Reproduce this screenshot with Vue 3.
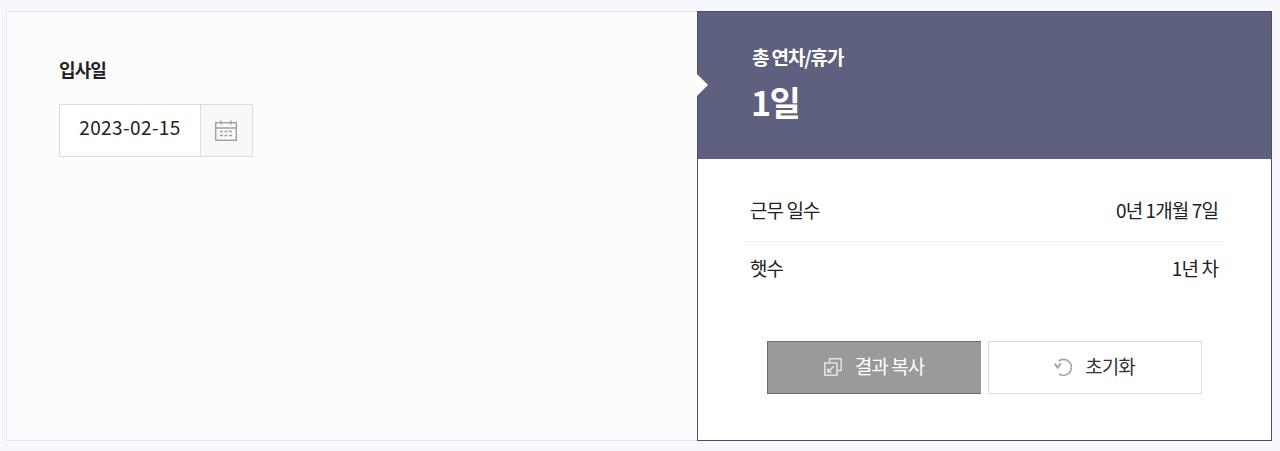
<script setup>
const rows = [
  { label: '근무 일수', value: '0년 1개월 7일' },
  { label: '햇수', value: '1년 차' },
]
</script>

<template>
  <div class="page">
    <div class="card">
      <section class="left">
        <div class="label">입사일</div>
        <div class="date">
          <div class="date-value">2023-02-15</div>
          <div class="date-btn">
            <svg width="22" height="21" viewBox="0 0 22 21" fill="none" stroke="#a0a0a0" stroke-width="1.4">
              <rect x="0.7" y="2.7" width="20.6" height="17.6" />
              <path d="M0.7 8H21.3M6 0.5V4.5M16 0.5V4.5" />
              <path d="M5 11.5H8M9.5 11.5H12.5M14 11.5H17M5 15.5H8M9.5 15.5H12.5M14 15.5H17" stroke-width="1.5" />
            </svg>
          </div>
        </div>
      </section>
      <section class="right">
        <div class="head">
          <div class="head-title">총 연차/휴가</div>
          <div class="head-value">1일</div>
        </div>
        <div class="body">
          <div v-for="r in rows" :key="r.label" class="row">
            <span>{{ r.label }}</span>
            <span>{{ r.value }}</span>
          </div>
          <div class="actions">
            <button class="btn primary">
              <svg width="18" height="18" viewBox="0 0 18 18" fill="none" stroke="#e4e4e4" stroke-width="1.5">
                <path d="M5.5 4.5V0.8H17.2V12.5H13.5" />
                <rect x="0.8" y="5" width="12.2" height="12.2" />
                <path d="M4.5 13.5L10 8" />
                <path d="M4 10.5V14H7.5" stroke-width="1.7" />
              </svg>
              결과 복사
            </button>
            <button class="btn plain">
              <svg width="18" height="18" viewBox="0 0 18 18" fill="none" stroke="#a8a8a8" stroke-width="1.7">
                <path d="M4.5 3A8 8 0 1 1 5 16" />
                <path d="M0.8 5.6L3.6 9.6L6.8 5.4" stroke-width="2" />
              </svg>
              초기화
            </button>
          </div>
        </div>
      </section>
    </div>
  </div>
</template>

<style>
html, body { margin: 0; background: #f7f8fe; }
</style>

<style scoped>
.page {
  box-sizing: border-box;
  height: 451px;
  padding: 11px 8px 10px 6px;
  font-family: "Noto Sans CJK KR", "Noto Sans", sans-serif;
  color: #222;
}
.card {
  display: flex;
  height: 430px;
}
.left {
  flex: 1;
  box-sizing: border-box;
  padding: 44px 0 0 52px;
  background: #fcfcfd;
  border: 1px solid #e4e4ee;
  border-right: 0;
}
.label {
  font-size: 18px;
  font-weight: 700;
  line-height: 26px;
  letter-spacing: -0.9px;
}
.date {
  display: flex;
  width: 194px;
  height: 53px;
  margin-top: 22px;
  box-sizing: border-box;
  border: 1px solid #dcdcdc;
}
.date-value {
  width: 141px;
  box-sizing: border-box;
  padding-bottom: 8px;
  background: #fff;
  border-right: 1px solid #dcdcdc;
  display: flex;
  align-items: center;
  justify-content: center;
  font-size: 19px;
  letter-spacing: 0.4px;
  color: #222;
}
.date-btn {
  flex: 1;
  background: #f8f8f8;
  display: flex;
  align-items: center;
  justify-content: center;
  padding: 0 2px 0 0;
}
.right {
  width: 575px;
  box-sizing: border-box;
  border: 1px solid #4b4e6d;
  background: #fff;
  display: flex;
  flex-direction: column;
}
.head {
  position: relative;
  height: 147px;
  box-sizing: border-box;
  padding: 32px 0 0 54px;
  background: #5d607e;
  color: #fff;
}
.head::before {
  content: "";
  position: absolute;
  left: -1px;
  top: 62px;
  border-left: 11px solid #fcfcfd;
  border-top: 11px solid transparent;
  border-bottom: 11px solid transparent;
}
.head-title {
  font-size: 19px;
  font-weight: 700;
  line-height: 26px;
  letter-spacing: -1.1px;
}
.head-value {
  font-size: 34px;
  font-weight: 700;
  line-height: 44px;
  margin: 10px 0 0 -1px;
  letter-spacing: -1.5px;
}
.body {
  padding: 22px 47px 0 46px;
}
.row {
  display: flex;
  justify-content: space-between;
  height: 58px;
  box-sizing: border-box;
  padding: 0 6px;
  line-height: 52px;
  font-size: 19px;
  letter-spacing: -0.9px;
}
.row:first-child {
  border-bottom: 1px solid #f0f0f0;
  height: 61px;
  line-height: 58px;
}
.actions {
  display: flex;
  justify-content: center;
  gap: 7px;
  margin-top: 41px;
}
.btn {
  width: 214px;
  height: 53px;
  box-sizing: border-box;
  display: flex;
  align-items: center;
  justify-content: center;
  gap: 13px;
  font: inherit;
  font-size: 19px;
  letter-spacing: -0.9px;
  padding: 0 0 5px;
}
.btn svg {
  margin-top: 3px;
}
.primary {
  background: #9a9a9a;
  border: 1px solid #6c6c6c;
  border-width: 1px 0 1px 1px;
  color: #fff;
}
.plain {
  background: #fff;
  border: 1px solid #dcdcdc;
  color: #333;
}
</style>
